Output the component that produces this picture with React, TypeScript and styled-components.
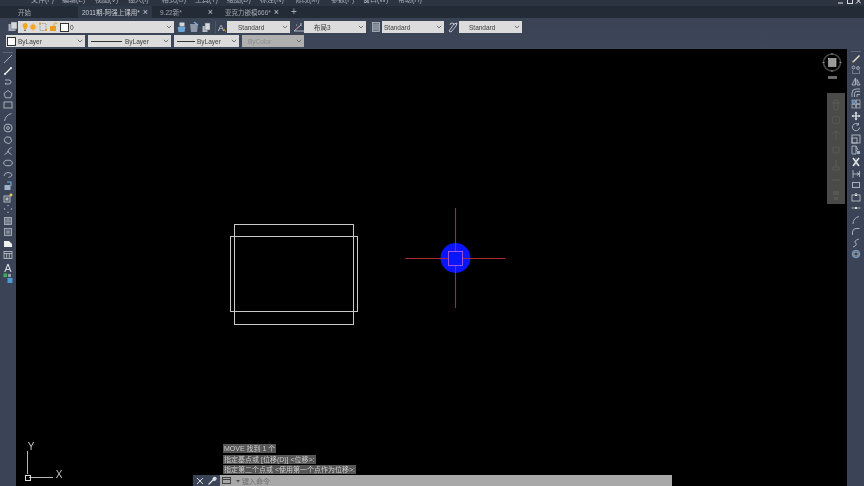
import React from "react";
import styled, { createGlobalStyle } from "styled-components";

const Global = createGlobalStyle`
  html, body { margin: 0; padding: 0; background: #000; overflow: hidden; }
  #root { width: 864px; height: 486px; }
`;

const Page = styled.div`
  width: 864px; height: 486px; display: flex; flex-direction: column; overflow: hidden;
  font-family: "Liberation Sans", "Noto Sans CJK SC", sans-serif; filter: blur(0.4px);
  position: relative; background: #000;
`;
const MenuBar = styled.div`
  height: 6px; flex: none; background: #2c3442; display: flex; align-items: flex-end; overflow: hidden;
  padding-left: 31px; position: relative;
`;
const MenuItem = styled.span<{ $w: number }>`
  width: ${p => p.$w}px; flex: none; font-size: 7px; line-height: 9px; color: #aeb3bb; white-space: nowrap; margin-bottom: 2px;
`;
const WindowControls = styled.svg`
  position: absolute; right: 3px; top: 0; width: 24px; height: 5px;
`;
const TabBar = styled.div`
  height: 12px; flex: none; background: #232b36; display: flex; align-items: stretch; font-size: 6.5px; color: #a9afb8;
`;
const Tab = styled.div<{ $w: number; $active?: boolean; $pad: number }>`
  width: ${p => p.$w}px; flex: none; box-sizing: border-box; padding-left: ${p => p.$pad}px; padding-right: 4px;
  display: flex; align-items: center; justify-content: space-between; white-space: nowrap;
  background: ${p => (p.$active ? "#2f3846" : "transparent")};
  color: ${p => (p.$active ? "#c8ccd2" : "#a4aab3")};
`;
const TabClose = styled.span`
  font-size: 9px; line-height: 10px; color: #c7cbd1;
`;
const Plus = styled.span`
  margin-left: 8px; font-size: 10px; line-height: 12px; color: #aab0b8;
`;
const Toolbar = styled.div`
  height: 31px; flex: none; box-sizing: border-box; padding-top: 3px;
  background: linear-gradient(#3a4354, #3e4759); display: flex; flex-direction: column; gap: 2px;
`;
const ToolRow = styled.div<{ $left: number }>`
  height: 12px; display: flex; align-items: stretch; padding-left: ${p => p.$left}px;
`;
const Combo = styled.div<{ $w: number; $ml?: number; $disabled?: boolean; $pl?: number; $gap?: number }>`
  width: ${p => p.$w}px; margin-left: ${p => p.$ml ?? 0}px; flex: none; box-sizing: border-box;
  background: ${p => (p.$disabled ? "#b0b0b0" : "#dcdcdc")};
  color: ${p => (p.$disabled ? "#8c8c8c" : "#3a3a3a")};
  font-size: 6.5px; display: flex; align-items: center; position: relative;
  padding: 0 9px 0 ${p => p.$pl ?? 2}px; gap: ${p => p.$gap ?? 2}px; white-space: nowrap;
`;
const Caret = styled.svg`
  position: absolute; right: 2px; top: 4px; width: 6px; height: 4px;
`;
const Swatch = styled.span`
  width: 7px; height: 7px; background: #fff; border: 1px solid #333; flex: none;
`;
const LineSample = styled.span<{ $w: number }>`
  width: ${p => p.$w}px; height: 1px; background: #333; flex: none;
`;
const ToolIcon = styled.svg<{ $w?: number; $ml?: number }>`
  width: ${p => p.$w ?? 12}px; height: 12px; margin-left: ${p => p.$ml ?? 0}px; flex: none;
`;
const Main = styled.div`
  flex: 1; display: flex; min-height: 0;
`;
const Rail = styled.div<{ $w: number; $top: number }>`
  width: ${p => p.$w}px; flex: none; background: #3b4456; display: flex; flex-direction: column;
  align-items: center; padding-top: ${p => p.$top}px; gap: 1.55px; box-sizing: border-box;
`;
const RailHandle = styled.div`
  width: 10px; height: 1px; background: #5d6676; flex: none;
`;
const RailIcon = styled.svg`
  width: 10px; height: 10px; flex: none;
`;
const Canvas = styled.div`
  flex: 1; background: #000; position: relative; overflow: hidden;
`;
const Drawing = styled.svg`
  position: absolute; left: 0; top: 0; width: 831px; height: 437px;
`;
const NavBar = styled.div`
  position: absolute; left: 811px; top: 44px; width: 18px; height: 111px; background: #4a4b48;
  display: flex; flex-direction: column; align-items: center; padding-top: 6px; gap: 3px; box-sizing: border-box;
`;
const NavGlyph = styled.svg`
  width: 12px; height: 12px; flex: none;
`;
const CommandHistory = styled.div`
  position: absolute; left: 207px; top: 395px; display: flex; flex-direction: column; align-items: flex-start; gap: 1.5px;
`;
const HistoryLine = styled.span`
  background: #565656; color: #cfcfcf; font-size: 7px; line-height: 9px; height: 9px; padding: 0 1px; white-space: nowrap;
`;
const CommandBar = styled.div`
  position: absolute; left: 177px; bottom: 0; width: 479px; height: 11px; display: flex; background: #a8a8a8;
`;
const CommandTools = styled.div`
  width: 27px; flex: none; background: #3b4456; display: flex; align-items: center; padding-left: 3px; gap: 3px; box-sizing: border-box;
`;
const CommandInput = styled.div`
  flex: 1; display: flex; align-items: center; padding-left: 2px; gap: 2px; font-size: 7px; color: #6d6d6d;
`;

const C = "#b4bac4";
const s = { fill: "none", stroke: C, strokeWidth: 0.9 };

const leftIcons: React.ReactNode[] = [
  <path d="M1 9L9 1" {...s} />,
  <g><path d="M2 8L8 2" {...s} stroke="#fff" strokeWidth={1.2} /><circle cx="2" cy="8" r="1" fill="#fff" /><circle cx="8" cy="2" r="1" fill="#fff" /></g>,
  <path d="M2 3h4a2 2 0 0 1 0 4H2M2 7l1.5-1.2" {...s} />,
  <path d="M5 1.5L9 4.5L7.5 8.8H2.5L1 4.5Z" {...s} />,
  <rect x="1" y="2" width="8" height="6" {...s} />,
  <path d="M1.5 9Q2.5 3 8.5 1.5" {...s} />,
  <g><circle cx="5" cy="5" r="4" {...s} /><circle cx="5" cy="5" r="1.4" {...s} /></g>,
  <path d="M2 3.5Q3 1 5 2Q8 1.5 8 4Q9.5 6 7.5 7.5Q6 9.5 4 8Q1 7.5 1.5 5Q1 4 2 3.5Z" {...s} />,
  <path d="M1.5 8.5Q4 8 5 5T8.5 1.5M5 5Q6 8 8.5 8.5" {...s} />,
  <ellipse cx="5" cy="5" rx="4.3" ry="2.8" {...s} />,
  <path d="M1 6Q1.5 2.5 5 2.5T9 5Q8 7 5.5 7.5" {...s} />,
  <g><rect x="1.5" y="4" width="6" height="5" fill="#9fb2c8" /><path d="M4 1h4v4" fill="none" stroke="#6ea8dc" strokeWidth={1.2} /></g>,
  <g><rect x="1" y="3" width="6" height="6" fill="none" stroke={C} /><rect x="2.5" y="4.5" width="3" height="3" fill={C} /><circle cx="8" cy="2" r="1.4" fill="#e6c860" /></g>,
  <g fill={C}><rect x="4.4" y="1" width="1.2" height="1.2" /><rect x="4.4" y="7.8" width="1.2" height="1.2" /><rect x="1" y="4.4" width="1.2" height="1.2" /><rect x="7.8" y="4.4" width="1.2" height="1.2" /></g>,
  <g><rect x="1.5" y="1.5" width="7" height="7" fill="#6f7785" stroke={C} strokeWidth={0.8} /><path d="M1.5 5h7M5 1.5v7" stroke="#aab" strokeWidth={0.4} /></g>,
  <g><rect x="1.5" y="1.5" width="7" height="7" fill="#596170" stroke={C} strokeWidth={0.8} /><rect x="3.5" y="3.5" width="3" height="3" fill="#8a92a0" /></g>,
  <path d="M1 2h5l3 3v3H1Z" fill="#f0f0f0" />,
  <g {...s}><rect x="1" y="1.5" width="8" height="7" /><path d="M1 3.5h8M3.6 3.5v5M6.3 3.5v5" /></g>,
  <text x="5" y="9.5" textAnchor="middle" fontSize="11" fill="#d8dce2" fontFamily="Liberation Sans">A</text>,
  <g><rect x="0.5" y="0.5" width="3.6" height="3.6" fill="#3fae58" /><rect x="5" y="1" width="3" height="3" fill="#8fa0b3" /><rect x="4.5" y="5" width="5" height="5" fill="#4a9ad8" /></g>,
];

const rightIcons: React.ReactNode[] = [
  <g><path d="M1 9L8 2L9 3L2.5 9.5Z" fill="#e8e4c8" /><path d="M1 9.5L2 7.5L3 8.5Z" fill="#d8a040" /></g>,
  <g {...s}><circle cx="2.5" cy="2.5" r="1.4" /><circle cx="7" cy="3" r="1.4" /><path d="M1.5 5.5v3h7v-3" strokeDasharray="1 1" /></g>,
  <path d="M4.5 2L1 9H4.5ZM6 3.5L9 9H6Z" {...s} />,
  <path d="M1 9V5A4 4 0 0 1 5 1H9M3.5 9V5.5A2 2 0 0 1 5.5 3.5H9M6 9V6.5H9" {...s} />,
  <g><rect x="1" y="1" width="3.5" height="3.5" fill="#4d7fb8" stroke={C} strokeWidth={0.6} /><rect x="5.5" y="1" width="3.5" height="3.5" fill="none" stroke={C} strokeWidth={0.7} /><rect x="1" y="5.5" width="3.5" height="3.5" fill="none" stroke={C} strokeWidth={0.7} /><rect x="5.5" y="5.5" width="3.5" height="3.5" fill="none" stroke={C} strokeWidth={0.7} /></g>,
  <path d="M5 0.5L6.6 2.4H5.6V4.4H7.6V3.4L9.5 5L7.6 6.6V5.6H5.6V7.6H6.6L5 9.5L3.4 7.6H4.4V5.6H2.4V6.6L0.5 5L2.4 3.4V4.4H4.4V2.4H3.4Z" fill="#eef0f3" />,
  <path d="M7.5 2.5A3.6 3.6 0 1 0 8.6 5.5M7.5 0.8V3H5.3" {...s} />,
  <g {...s}><rect x="1" y="4" width="5" height="5" /><rect x="1" y="1" width="8" height="8" /></g>,
  <g {...s}><path d="M1 1h4v8H1ZM5 5l4 4M5 1l2 4" /><rect x="6" y="6" width="3" height="3" fill="#9fb2c8" stroke="none" /></g>,
  <g><path d="M2 1l6 8M8 1L2 9" stroke="#eef0f3" strokeWidth={1.4} /><path d="M5 1v8" stroke={C} strokeWidth={0.5} /></g>,
  <g {...s}><path d="M2 1v8M2 5h6M6 3.5L8 5L6 6.5" /><path d="M8.5 2v6" /></g>,
  <rect x="1.5" y="2.5" width="7" height="5" {...s} />,
  <g {...s}><rect x="1" y="3" width="8" height="6" /><path d="M5 1v3M3.8 2.8L5 4L6.2 2.8" stroke="#fff" /></g>,
  <g><path d="M0.5 5H9.5" {...s} /><circle cx="5" cy="5" r="1" fill="#fff" /></g>,
  <path d="M2 9Q2 3 8 1.5" {...s} />,
  <path d="M1.5 9V6Q1.5 2.5 5 2.5H8.5" {...s} />,
  <path d="M2 9Q7 7 4.5 5T8 1" {...s} />,
  <g><circle cx="5" cy="5" r="3.8" {...s} stroke="#7fb2dc" /><rect x="3" y="3" width="4" height="4" {...s} /></g>,
];

const menus: [string, number][] = [
  ["文件(F)", 31], ["编辑(E)", 33], ["视图(V)", 33], ["插入(I)", 34], ["格式(O)", 33], ["工具(T)", 32],
  ["绘图(D)", 33], ["标注(N)", 35], ["修改(M)", 36], ["参数(P)", 32], ["窗口(W)", 35], ["帮助(H)", 33],
];
const navGlyphs = [
  <path d="M4 1h4v10H4ZM2 4h8" fill="none" stroke="#595a57" />,
  <circle cx="6" cy="6" r="4" fill="none" stroke="#595a57" />,
  <path d="M6 1v10M2 5l4-3 4 3" fill="none" stroke="#595a57" />,
  <path d="M3 3h6v6H3Z" fill="none" stroke="#595a57" />,
  <path d="M6 1v7M3 8h6v3H3Z" fill="none" stroke="#595a57" />,
  <path d="M2 6h8" fill="none" stroke="#595a57" />,
  <path d="M3 2h6v4H3ZM4 8h4v3H4Z" fill="#575855" />,
];

const CaretDown = () => (
  <Caret viewBox="0 0 6 4"><path d="M0.8 0.8L3 3L5.2 0.8" fill="none" stroke="#666" strokeWidth={0.9} /></Caret>
);

export default function App() {
  return (
    <Page>
      <Global />
      <MenuBar>
        {menus.map(([m, w]) => <MenuItem key={m} $w={w}>{m}</MenuItem>)}
        <WindowControls viewBox="0 1.5 24 5">
          <path d="M1 4.500h5" stroke="#e8e8e8" />
          <rect x="10.500" y="0" width="5" height="5" fill="none" stroke="#ddd" />
          <path d="M19 0l5 5M24 0l-5 5" stroke="#eee" />
        </WindowControls>
      </MenuBar>
      <TabBar>
        <Tab $w={78} $pad={18}>开始</Tab>
        <Tab $w={74} $pad={4} $active>2011期-阿强上课用*<TabClose>×</TabClose></Tab>
        <Tab $w={65} $pad={8}>9.22新*<TabClose>×</TabClose></Tab>
        <Tab $w={66} $pad={8}>亚克力嵌模666*<TabClose>×</TabClose></Tab>
        <Plus>+</Plus>
      </TabBar>
      <Toolbar>
        <ToolRow $left={7}>
          <ToolIcon viewBox="0 0 12 12">
            <rect x="1.500" y="3" width="7" height="7" fill="#aab2bd" />
            <rect x="4" y="1" width="6" height="7" fill="#d5d9de" stroke="#59626f" strokeWidth={0.5} />
          </ToolIcon>
          <Combo $w={156} $ml={-1} $pl={1} $gap={1}>
            <svg width="40" height="12" viewBox="0 0 40 12">
              <path d="M6 2a2.600 2.600 0 0 1 2.200 4.200L7.400 8H5L4.200 6.200A2.600 2.600 0 0 1 6 2Z" fill="#f2a51e" />
              <rect x="5" y="8.600" width="2" height="1.400" fill="#7a7a7a" />
              <circle cx="14" cy="6" r="2.700" fill="#f5a623" />
              <path d="M14 1.800v1M14 9.200v1M9.800 6h1M17.200 6h1" stroke="#f5a623" strokeWidth={0.6} />
              <rect x="21" y="2.500" width="6" height="7" fill="none" stroke="#777" strokeWidth={0.7} strokeDasharray="1.2 1" />
              <rect x="20" y="1.500" width="2" height="2" fill="#e6a030" />
              <rect x="26" y="8" width="2" height="2" fill="#e6a030" />
              <rect x="31" y="5" width="6" height="5" fill="#ef9a1e" />
              <path d="M35 5V3a1.600 1.600 0 0 1 3 0" fill="none" stroke="#ef9a1e" strokeWidth={1} />
            </svg>
            <Swatch />
            <span>0</span>
            <CaretDown />
          </Combo>
          <ToolIcon $ml={2} viewBox="0 0 12 12">
            <path d="M1.500 6h8l-1 5H2.500Z" fill="#6aa5d8" /><rect x="3.500" y="1.500" width="5" height="4" fill="#cfd6de" />
          </ToolIcon>
          <ToolIcon viewBox="0 0 12 12">
            <path d="M2 3h8l-1 8H3Z" fill="#8d99a8" /><path d="M6 1l4 3" stroke="#7ab4e2" strokeWidth={1.2} />
          </ToolIcon>
          <ToolIcon viewBox="0 0 12 12">
            <rect x="2.500" y="5" width="5" height="6" fill="#b6bec8" /><rect x="5" y="2" width="5" height="7" fill="#d5d9de" stroke="#59626f" strokeWidth={0.5} />
          </ToolIcon>
          <ToolIcon $w={12} $ml={3} viewBox="0 0 12 12">
            <path d="M0.500 0v12" stroke="#555e6d" strokeWidth={0.7} />
            <text x="3" y="9.500" fontSize="9" fill="#d6dae0" fontFamily="Liberation Sans">A</text>
            <path d="M9 8l1.500 2.500" stroke="#e6a030" />
          </ToolIcon>
          <Combo $w={63} $pl={11}>Standard<CaretDown /></Combo>
          <ToolIcon $ml={3} viewBox="0 0 12 12">
            <path d="M1 10L8 4M1 10h10M3 4h1M8 2v3" fill="none" stroke="#bfc5ce" strokeWidth={0.9} />
            <path d="M3 8l2-2" stroke="#d06060" strokeWidth={0.8} />
          </ToolIcon>
          <Combo $w={62} $ml={-1} $pl={10}>布局3<CaretDown /></Combo>
          <ToolIcon $ml={4} viewBox="0 0 12 12">
            <path d="M0 0v12" stroke="#555e6d" strokeWidth={0.7} />
            <rect x="2.500" y="1.500" width="7" height="9" fill="#6d7686" stroke="#c4c9d1" strokeWidth={0.7} />
            <path d="M3 4h6M3 6h6M3 8h6" stroke="#c4c9d1" strokeWidth={0.6} />
          </ToolIcon>
          <Combo $w={62}>Standard<CaretDown /></Combo>
          <ToolIcon $ml={3} viewBox="0 0 12 12">
            <path d="M2 10L7 3l3-1-1 3-5 6ZM3 4a2 2 0 0 1 4 0" fill="none" stroke="#d0d4da" strokeWidth={0.9} />
          </ToolIcon>
          <Combo $w={63} $pl={10}>Standard<CaretDown /></Combo>
        </ToolRow>
        <ToolRow $left={6}>
          <Combo $w={79} $pl={1}><Swatch />ByLayer<CaretDown /></Combo>
          <Combo $w={83} $ml={3} $pl={3} $gap={3}><LineSample $w={31} />ByLayer<CaretDown /></Combo>
          <Combo $w={65} $ml={3} $pl={3} $gap={2}><LineSample $w={18} />ByLayer<CaretDown /></Combo>
          <Combo $w={62} $ml={3} $pl={6} $disabled>ByColor<CaretDown /></Combo>
        </ToolRow>
      </Toolbar>
      <Main>
        <Rail $w={16} $top={2.5}>
          <RailHandle />
          {leftIcons.map((ic, i) => <RailIcon key={i} viewBox="0 0 10 10">{ic}</RailIcon>)}
        </Rail>
        <Canvas>
          <Drawing viewBox="0 0 831 437">
            <g fill="none" stroke="#c9c9c9" strokeWidth={1}>
              <rect x="218.500" y="175.500" width="119" height="100" />
              <rect x="214.500" y="187.500" width="127" height="75" />
            </g>
            <circle cx="439.500" cy="209" r="15" fill="#0a14ff" />
            <path d="M389 209.500H489.500M439.500 159V259" stroke="#a8282e" strokeWidth={1.1} />
            <rect x="432.500" y="202.500" width="14" height="14" fill="#0a14ff" stroke="#b868e0" strokeWidth={0.8} />
            <circle cx="816" cy="13.500" r="8.500" fill="none" stroke="#4a4a4a" strokeWidth={1.5} />
            <path d="M816 4v2M816 21v2M806.500 13.500h2M823.500 13.500h2" stroke="#8a8a8a" strokeWidth={1} />
            <rect x="812.500" y="9.500" width="7.500" height="8" fill="#9a9a9a" stroke="#c4c4c4" strokeWidth={0.6} />
            <rect x="812" y="27" width="9" height="3" fill="#6a6a6a" />
            <path d="M11.500 425V402M13 428.500H37" stroke="#b5b5b5" strokeWidth={1} />
            <rect x="9.500" y="426.500" width="5" height="5" fill="none" stroke="#dcdcdc" strokeWidth={1} />
            <text x="15" y="401" textAnchor="middle" fontSize="10" fill="#c8c8c8" fontFamily="Liberation Sans">Y</text>
            <text x="43" y="429" textAnchor="middle" fontSize="10" fill="#c8c8c8" fontFamily="Liberation Sans">X</text>
          </Drawing>
          <NavBar>
            {navGlyphs.map((g, i) => <NavGlyph key={i} viewBox="0 0 12 12">{g}</NavGlyph>)}
          </NavBar>
          <CommandHistory>
            <HistoryLine>MOVE 找到 1 个</HistoryLine>
            <HistoryLine>指定基点或 [位移(D)] &lt;位移&gt;:</HistoryLine>
            <HistoryLine>指定第二个点或 &lt;使用第一个点作为位移&gt;:</HistoryLine>
          </CommandHistory>
          <CommandBar>
            <CommandTools>
              <svg width="8" height="8" viewBox="0 0 8 8"><path d="M1 1l6 6M7 1L1 7" stroke="#d5d8dd" strokeWidth={1} /></svg>
              <svg width="10" height="10" viewBox="0 0 10 10"><path d="M1.500 8.500L6 4M6 4a2 2 0 0 1 2.500-2.500L7 3l0.500 0.800L9 3A2 2 0 0 1 6 4" fill="none" stroke="#e0e3e8" strokeWidth={1.1} /></svg>
            </CommandTools>
            <CommandInput>
              <svg width="12" height="9" viewBox="0 0 12 9"><rect x="0.500" y="1.500" width="8" height="6" fill="none" stroke="#444" /><path d="M0.500 3.500h8" stroke="#444" /></svg>
              <svg width="4" height="4" viewBox="0 0 4 4"><path d="M0 1h4L2 3.500Z" fill="#555" /></svg>
              <span>键入命令</span>
            </CommandInput>
          </CommandBar>
        </Canvas>
        <Rail $w={17} $top={1.5}>
          <RailHandle />
          {rightIcons.map((ic, i) => <RailIcon key={i} viewBox="0 0 10 10">{ic}</RailIcon>)}
        </Rail>
      </Main>
    </Page>
  );
}
